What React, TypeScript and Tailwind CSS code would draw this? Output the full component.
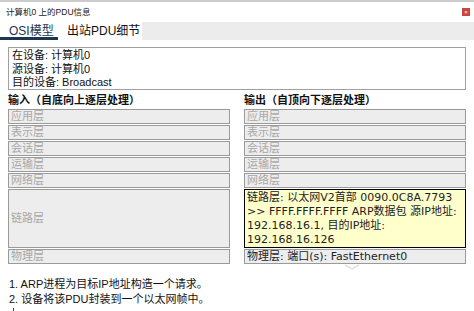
import React from 'react';

const layers = ['应用层', '表示层', '会话层', '运输层', '网络层'];

const cjk = "font-['Liberation_Sans','Noto_Sans_CJK_SC',sans-serif]";
const verdana = "font-['DejaVu_Sans','Noto_Sans_CJK_SC',sans-serif]";

const GreyRow: React.FC<{ label: string; tall?: boolean }> = ({ label, tall }) => (
  <div
    className={`flex items-center border border-[#9a9a9a] bg-[#ededed] pl-[2px] text-[11px] leading-[13px] text-[#a8a8a8] ${
      tall ? 'h-[59px]' : 'h-[15px]'
    }`}
  >
    {label}
  </div>
);

export default function App() {
  return (
    <div className={`w-[474px] h-[311px] bg-white overflow-hidden ${cjk}`}>
      <div className="h-[2px] bg-[#cccccc]" />

      {/* title bar */}
      <div className="h-[20px] flex items-center justify-between pl-[6px] pr-[4px]">
        <span className="text-[8.5px] leading-[10px] text-[#222]">计算机0 上的PDU信息</span>
        <div className="w-[8px] h-[8px] bg-[#c9463d] flex items-center justify-center text-white text-[6px] leading-none">
          ×
        </div>
      </div>

      {/* tabs */}
      <div className="h-[18px] flex whitespace-nowrap">
        <div className="w-[58px] pl-[9px] pt-[3px] border-b-[3px] border-[#1d3550] text-[12px] leading-[13px] text-[#1d3550]">
          OSI模型
        </div>
        <div className="w-[84px] pl-[9px] pt-[3px] text-[12px] leading-[13px] text-[#111]">出站PDU细节</div>
        <div className="flex-1 bg-[#ececec]" />
      </div>

      <div className="px-[8px]">
        {/* device info */}
        <div className="mt-[7px] h-[43px] border border-[#a0a0a0] pl-[3px] pt-[1px] text-[11px] leading-[13.5px] text-[#111]">
          <div>在设备: 计算机0</div>
          <div>源设备: 计算机0</div>
          <div>目的设备: Broadcast</div>
        </div>

        <div className="grid grid-cols-2 gap-[14px]">
          {/* input column */}
          <div>
            <div className="h-[19px] flex items-end pb-[2px] text-[11px] leading-[13px] font-bold text-[#111]">
              输入（自底向上逐层处理）
            </div>
            <div className="flex flex-col gap-[1px]">
              {layers.map((l) => (
                <GreyRow key={l} label={l} />
              ))}
              <GreyRow label="链路层" tall />
              <GreyRow label="物理层" />
            </div>
          </div>

          {/* output column */}
          <div>
            <div className="h-[19px] flex items-end pb-[2px] text-[11px] leading-[13px] font-bold text-[#111]">
              输出（自顶向下逐层处理）
            </div>
            <div className="flex flex-col gap-[1px]">
              {layers.map((l) => (
                <GreyRow key={l} label={l} />
              ))}
              <div className={`h-[59px] border border-black bg-[#ffffcc] pl-[2px] pt-[1px] text-[11px] leading-[14px] text-[#222] whitespace-nowrap overflow-hidden ${verdana}`}>
                <div>链路层: 以太网V2首部 0090.0C8A.7793</div>
                <div>&gt;&gt; FFFF.FFFF.FFFF ARP数据包 源IP地址:</div>
                <div>192.168.16.1, 目的IP地址:</div>
                <div>192.168.16.126</div>
              </div>
              <div className={`h-[15px] flex items-center border border-[#9a9a9a] bg-[#ededed] pl-[2px] text-[11px] leading-[13px] text-[#222] whitespace-nowrap ${verdana}`}>
                物理层: 端口(s): FastEthernet0
              </div>
            </div>
            <div className="flex justify-center pr-[6px]">
              <svg width="16" height="6" viewBox="0 0 16 6">
                <path d="M1 1 L8 5 L15 1" fill="none" stroke="#e2e2e2" strokeWidth="1.5" />
              </svg>
            </div>
          </div>
        </div>

        {/* steps */}
        <div className="mt-[7px] text-[11px] leading-[15px] text-[#111] pl-[1px]">
          <div>1. ARP进程为目标IP地址构造一个请求。</div>
          <div>2. 设备将该PDU封装到一个以太网帧中。</div>
          <div className="ml-[4px] mt-[1px] w-[1px] h-[6px] bg-[#444]" />
        </div>
      </div>
    </div>
  );
}
